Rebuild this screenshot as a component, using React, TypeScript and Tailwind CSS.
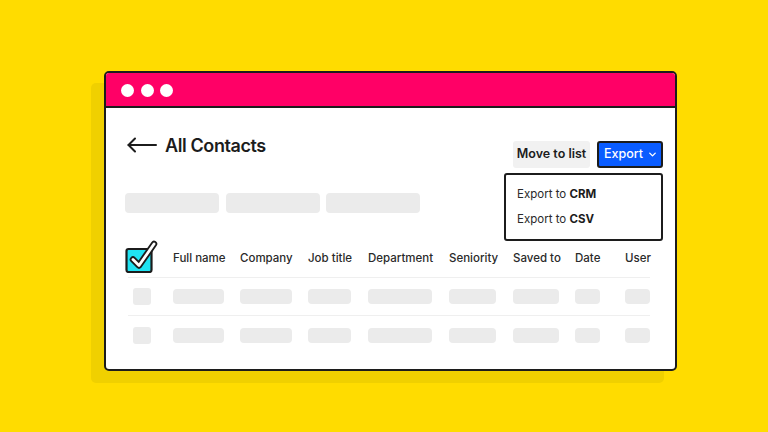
import { ChevronDown } from 'lucide-react'

const columns = [
  { label: 'Full name', col: 'w-[67px]', bar: 'w-[51px]' },
  { label: 'Company', col: 'w-[68px]', bar: 'w-[52px]' },
  { label: 'Job title', col: 'w-[60px]', bar: 'w-[43px]' },
  { label: 'Department', col: 'w-[81px]', bar: 'w-[64px]' },
  { label: 'Seniority', col: 'w-[64px]', bar: 'w-[47px]' },
  { label: 'Saved to', col: 'w-[62px]', bar: 'w-[46px]' },
  { label: 'Date', col: 'w-[50px]', bar: 'w-[25px]' },
  { label: 'User', col: 'w-[25px]', bar: 'w-[25px]' },
]

function CheckedBox() {
  return (
    <svg width="34" height="33" viewBox="0 0 34 33" className="ml-[-3px] mt-[-5px]">
      <rect x="1.5" y="9" width="25" height="23" rx="2" fill="#1fe3f2" stroke="#1c1c1c" strokeWidth="2.2" />
      <path d="M8 19.5 L14 25.5 L29 4" fill="none" stroke="#1c1c1c" strokeWidth="6.5" strokeLinecap="round" strokeLinejoin="round" />
      <path d="M8 19.5 L14 25.5 L29 4" fill="none" stroke="#ffffff" strokeWidth="2.8" strokeLinecap="round" strokeLinejoin="round" />
    </svg>
  )
}

function BackArrow() {
  return (
    <svg width="30" height="16" viewBox="0 0 30 16">
      <path d="M1.5 8 H29" stroke="#1c1c1c" strokeWidth="2" strokeLinecap="round" />
      <path d="M8 1.5 L1.5 8 L8 14.5" fill="none" stroke="#1c1c1c" strokeWidth="2" strokeLinecap="round" strokeLinejoin="round" />
    </svg>
  )
}

export default function App() {
  return (
    <div
      className="w-[768px] h-[432px] bg-[#ffdc00] pt-[71px] pl-[104px] overflow-hidden"
      style={{ fontFamily: 'Inter, "Noto Sans", sans-serif' }}
    >
      <div className="w-[573px] h-[300px] bg-white border-2 border-[#1c1c1c] rounded-[5px] shadow-[-13px_12px_0_0_#f0d000]">
        {/* title bar */}
        <div className="h-[35px] bg-[#ff0066] border-b-2 border-[#1c1c1c] rounded-t-[3px] flex items-center gap-[6.5px] pl-[15px] pt-[2px]">
          <div className="w-[13px] h-[13px] rounded-full bg-white" />
          <div className="w-[13px] h-[13px] rounded-full bg-white" />
          <div className="w-[13px] h-[13px] rounded-full bg-white" />
        </div>

        <div className="pl-[19px] pr-[12px]">
          {/* header */}
          <div className="flex justify-between items-start pt-[25px]">
            <div className="flex items-center gap-[8px] h-[24px] pl-[2px]">
              <BackArrow />
              <h1 className="text-[18px] font-semibold text-[#1c1c1c] tracking-[-0.4px]">All Contacts</h1>
            </div>
            <div className="relative flex gap-[7px] mt-[8px]">
              <button className="h-[27px] w-[77px] bg-[#f1f1f1] rounded-[3px] text-[12.5px] font-semibold text-[#1c1c1c]">
                Move to list
              </button>
              <button className="h-[27px] w-[66px] bg-[#0a5cff] border-2 border-[#1c1c1c] rounded-[3px] text-[12.5px] font-medium text-white flex items-center justify-center gap-[4px] pl-[2px]">
                Export
                <ChevronDown size={11} strokeWidth={3} />
              </button>
              <div className="absolute right-0 top-full mt-[5px] w-[159px] h-[68px] bg-white border-2 border-[#1c1c1c] rounded-[3px] flex flex-col justify-center gap-[8px] pl-[11px] text-[11.5px] text-[#2a2a2a]">
                <div>
                  Export to <span className="font-bold text-[#1c1c1c]">CRM</span>
                </div>
                <div>
                  Export to <span className="font-bold text-[#1c1c1c]">CSV</span>
                </div>
              </div>
            </div>
          </div>

          {/* filter placeholders */}
          <div className="flex gap-[6.5px] mt-[25px]">
            <div className="w-[94px] h-[20px] rounded-[4px] bg-[#ebebeb]" />
            <div className="w-[94px] h-[20px] rounded-[4px] bg-[#ebebeb]" />
            <div className="w-[94px] h-[20px] rounded-[4px] bg-[#ebebeb]" />
          </div>

          {/* table */}
          <div className="mt-[28px] ml-[3px] w-[522px]">
            <div className="flex items-center h-[37px] border-b border-[#efefef]">
              <div className="w-[45px] flex items-center">
                <CheckedBox />
              </div>
              {columns.map(c => (
                <div key={c.label} className={`${c.col} whitespace-nowrap text-[11.5px] font-medium text-[#2a2a2a]`}>
                  {c.label}
                </div>
              ))}
            </div>
            {[0, 1].map(r => (
              <div key={r} className={`flex items-center h-[38px] ${r === 0 ? 'border-b border-[#efefef]' : ''}`}>
                <div className="w-[45px] pl-[5px]">
                  <div className="w-[18px] h-[17px] rounded-[3px] bg-[#ebebeb]" />
                </div>
                {columns.map(c => (
                  <div key={c.label} className={c.col}>
                    <div className={`${c.bar} h-[15px] rounded-[4px] bg-[#ebebeb]`} />
                  </div>
                ))}
              </div>
            ))}
          </div>
        </div>
      </div>
    </div>
  )
}
